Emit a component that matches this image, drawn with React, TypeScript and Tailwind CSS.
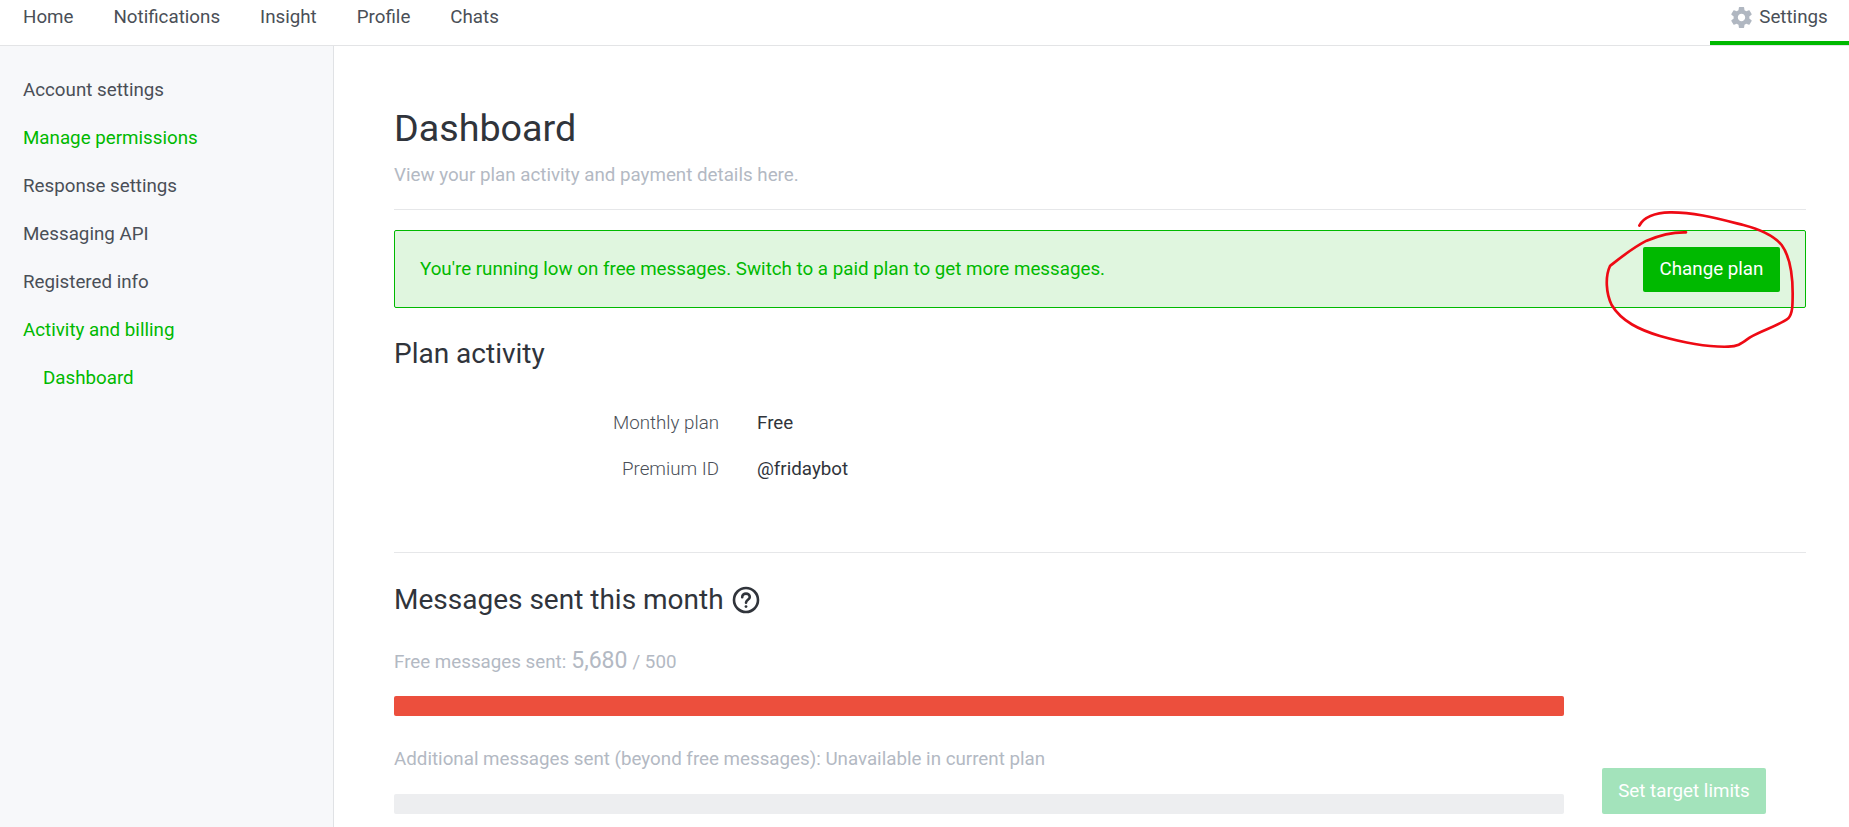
import React from "react";

const font = { fontFamily: "Roboto, sans-serif" };

const topItems = ["Home", "Notifications", "Insight", "Profile", "Chats"];

const sideItems = [
  { label: "Account settings", green: false },
  { label: "Manage permissions", green: true },
  { label: "Response settings", green: false },
  { label: "Messaging API", green: false },
  { label: "Registered info", green: false },
  { label: "Activity and billing", green: true },
];

function Gear() {
  return (
    <svg width="21" height="21" viewBox="2 2 20 20" fill="#b0b7c1">
      <path d="M19.43 12.98c.04-.32.07-.64.07-.98s-.03-.66-.07-.98l2.11-1.65c.19-.15.24-.42.12-.64l-2-3.46c-.12-.22-.39-.3-.61-.22l-2.49 1c-.52-.4-1.08-.73-1.69-.98l-.38-2.65C14.46 2.18 14.25 2 14 2h-4c-.25 0-.46.18-.49.42l-.38 2.65c-.61.25-1.17.59-1.69.98l-2.49-1c-.23-.09-.49 0-.61.22l-2 3.46c-.13.22-.07.49.12.64l2.11 1.65c-.04.32-.07.65-.07.98s.03.66.07.98l-2.11 1.65c-.19.15-.24.42-.12.64l2 3.46c.12.22.39.3.61.22l2.49-1c.52.4 1.08.73 1.69.98l.38 2.65c.03.24.24.42.49.42h4c.25 0 .46-.18.49-.42l.38-2.65c.61-.25 1.17-.59 1.69-.98l2.49 1c.23.09.49 0 .61-.22l2-3.46c.12-.22.07-.49-.12-.64l-2.11-1.65zM12 15.5c-1.93 0-3.5-1.57-3.5-3.5s1.57-3.5 3.5-3.5 3.5 1.57 3.5 3.5-1.57 3.5-3.5 3.5z" />
    </svg>
  );
}

function Help() {
  return (
    <svg width="28" height="28" viewBox="0 0 28 28" fill="none" stroke="#30343b" strokeWidth="2.6">
      <circle cx="14" cy="14" r="12" />
      <path d="M10.2 11.2c0-2.2 1.7-3.6 3.8-3.6s3.8 1.4 3.8 3.4c0 2.8-3.8 2.9-3.8 5.8" strokeLinecap="round" />
      <circle cx="14" cy="20.6" r="1.4" fill="#30343b" stroke="none" />
    </svg>
  );
}

export default function App() {
  return (
    <div style={font} className="relative h-[827px] w-[1849px] overflow-hidden bg-white text-[18.75px] text-[#4a4f57]">
      <header className="flex h-[46px] items-start justify-between border-b border-[#e3e4e6]">
        <nav className="flex gap-[40px] pl-[23px] pt-[6px] leading-[22px]">
          {topItems.map((t) => (
            <span key={t}>{t}</span>
          ))}
        </nav>
        <div className="flex h-[45px] w-[139px] items-start justify-center gap-[7px] border-b-4 border-[#00b900] pt-[6px] leading-[22px]">
          <span className="pt-[1px]">
            <Gear />
          </span>
          <span>Settings</span>
        </div>
      </header>

      <div className="flex h-[781px]">
        <aside className="w-[334px] shrink-0 border-r border-[#e0e2e5] bg-[#f7f8fa] pl-[23px] pt-[20px]">
          {sideItems.map((s) => (
            <div key={s.label} className={`h-[48px] leading-[48px] ${s.green ? "text-[#00b900]" : "text-[#4a4f57]"}`}>
              {s.label}
            </div>
          ))}
          <div className="h-[48px] pl-[20px] leading-[48px] text-[#00b900]">Dashboard</div>
        </aside>

        <main className="w-[1515px] pl-[60px] pr-[43px]">
          <h1 className="mt-[60px] text-[37.7px] leading-[44px] text-[#30343b]">Dashboard</h1>
          <p className="mt-[13px] leading-[24px] text-[#b3b9c3]">View your plan activity and payment details here.</p>
          <div className="mt-[22px] h-px bg-[#e6e7e9]" />

          <div className="mt-[20px] flex h-[78px] items-center justify-between rounded-[2px] border border-[#00b900] bg-[#e0f6df] pl-[25px] pr-[25px]">
            <span className="leading-[24px] text-[#00b900]">
              You're running low on free messages. Switch to a paid plan to get more messages.
            </span>
            <button className="h-[45px] w-[137px] rounded-[2px] bg-[#00b900] text-center text-white">
              Change plan
            </button>
          </div>

          <h2 className="mt-[29px] text-[28px] leading-[34px] text-[#30343b]">Plan activity</h2>

          <div className="mt-[40px] grid grid-cols-[325px_1fr] gap-x-[38px] gap-y-[22px] leading-[24px]">
            <span className="text-right font-light text-[#4a4f57]">Monthly plan</span>
            <span className="text-[#30343b]">Free</span>
            <span className="text-right font-light text-[#4a4f57]">Premium ID</span>
            <span className="text-[#30343b]">@fridaybot</span>
          </div>

          <div className="mt-[71px] h-px bg-[#e6e7e9]" />

          <h2 className="mt-[29px] flex items-center gap-[8px] text-[28px] leading-[36px] text-[#30343b]">
            Messages sent this month
            <Help />
          </h2>

          <p className="mt-[27px] flex items-baseline leading-[32px] text-[#b3b9c3]">
            <span>Free messages sent:</span>
            <span className="ml-[5px] text-[23px]">5,680</span>
            <span className="ml-[5px]">/ 500</span>
          </p>

          <div className="mt-[18px] h-[20px] w-[1170px] rounded-[2px] bg-[#ec4f3d]" />

          <div className="flex w-[1372px] items-start justify-between">
            <div className="w-[1170px]">
              <p className="mt-[31px] leading-[24px] text-[#b3b9c3]">
                Additional messages sent (beyond free messages): Unavailable in current plan
              </p>
              <div className="mt-[23px] h-[20px] rounded-[2px] bg-[#edeef0]" />
            </div>
            <button className="mt-[52px] h-[46px] w-[164px] rounded-[2px] bg-[#a3e3bb] text-center text-white">
              Set target limits
            </button>
          </div>
        </main>
      </div>

      <svg className="pointer-events-none absolute left-[1560px] top-[190px]" width="289" height="180" viewBox="0 0 867 540" fill="none">
        <path
          d="M238 107 C250 82 285 68 330 67 C400 66 470 85 550 105 C600 118 640 135 665 165 C690 200 698 250 698 310 C698 345 698 370 685 385 C660 405 610 420 570 442 C545 460 535 470 505 470 C440 472 370 458 300 438 C240 420 185 395 155 345 C138 310 135 260 150 228 C175 208 215 175 260 152 C300 135 340 126 378 127"
          stroke="#ee0a14"
          strokeWidth="8"
          strokeLinecap="round"
        />
      </svg>
    </div>
  );
}
